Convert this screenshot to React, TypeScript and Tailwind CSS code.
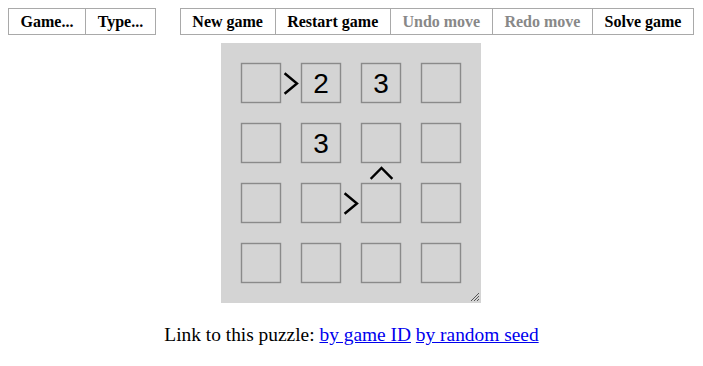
import React from 'react';

const serif = { fontFamily: '"Liberation Serif", "Times New Roman", serif' };

const leftButtons = [
  { label: 'Game...', enabled: true },
  { label: 'Type...', enabled: true },
];

const rightButtons = [
  { label: 'New game', enabled: true },
  { label: 'Restart game', enabled: true },
  { label: 'Undo move', enabled: false },
  { label: 'Redo move', enabled: false },
  { label: 'Solve game', enabled: true },
];

// clue digits, keyed by "row,col"
const clues: Record<string, string> = { '0,1': '2', '0,2': '3', '1,1': '3' };

const ButtonGroup = ({ items }: { items: { label: string; enabled: boolean }[] }) => (
  <div className="flex border border-[#a9a9a9] bg-white">
    {items.map((b, i) => (
      <div
        key={b.label}
        className={`h-[25px] flex items-center px-[11.6px] text-[16px] font-bold leading-none ${
          i > 0 ? 'border-l border-[#a9a9a9]' : ''
        } ${b.enabled ? 'text-black' : 'text-[#888888]'}`}
      >
        {b.label}
      </div>
    ))}
  </div>
);

const Board = () => {
  const cells = [];
  for (let r = 0; r < 4; r++) {
    for (let c = 0; c < 4; c++) {
      const x = 20 + c * 60;
      const y = 20 + r * 60;
      const clue = clues[`${r},${c}`];
      cells.push(
        <g key={`${r}-${c}`}>
          <rect x={x + 0.5} y={y + 0.5} width={39} height={39} fill="#d4d4d4" stroke="#8a8a8a" strokeWidth={1.4} />
          {clue && (
            <text
              x={x + 20}
              y={y + 30}
              textAnchor="middle"
              fontSize={28}
              fontFamily='"Liberation Sans", Arial, sans-serif'
              fill="#000"
            >
              {clue}
            </text>
          )}
        </g>
      );
    }
  }
  return (
    <svg width={260} height={260} viewBox="0 0 260 260" className="block">
      <rect width={260} height={260} fill="#d4d4d4" />
      {cells}
      <g fill="none" stroke="#000" strokeWidth={2.4} strokeLinecap="square">
        <polyline points="64.5,31 76,40.5 64.5,50" />
        <polyline points="124.5,151 136,160.5 124.5,170" />
        <polyline points="150.5,135 160.5,125 170.5,135" />
      </g>
      <g stroke="#555" strokeWidth={1}>
        <line x1={250} y1={258} x2={258} y2={250} />
        <line x1={253} y1={258} x2={258} y2={253} />
        <line x1={256} y1={258} x2={258} y2={256} />
      </g>
    </svg>
  );
};

export default function App() {
  return (
    <div className="w-[703px] h-[366px] bg-white px-2 pt-2" style={serif}>
      <div className="flex gap-[24px]">
        <ButtonGroup items={leftButtons} />
        <ButtonGroup items={rightButtons} />
      </div>
      <div className="flex justify-center mt-[8px] pr-[1px]">
        <Board />
      </div>
      <div className="mt-[21px] text-center text-[19.4px] leading-[22px] text-black">
        Link to this puzzle:{' '}
        <a href="#" className="text-[#0000ee] underline">by game ID</a>{' '}
        <a href="#" className="text-[#0000ee] underline">by random seed</a>
      </div>
    </div>
  );
}
